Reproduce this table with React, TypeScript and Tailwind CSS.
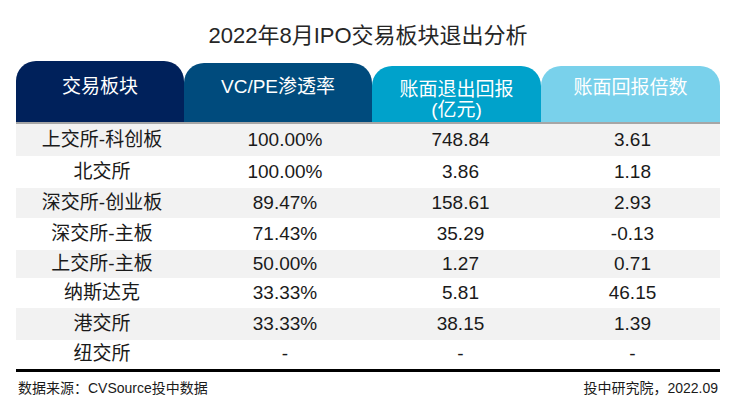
import React from "react";

const rows: { h: string; bg: string; c: string[] }[] = [
  { h: "h-[32px]", bg: "bg-[#f2f2f2]", c: ["上交所-科创板", "100.00%", "748.84", "3.61"] },
  { h: "h-[32px]", bg: "bg-white", c: ["北交所", "100.00%", "3.86", "1.18"] },
  { h: "h-[30px]", bg: "bg-[#f2f2f2]", c: ["深交所-创业板", "89.47%", "158.61", "2.93"] },
  { h: "h-[32px]", bg: "bg-white", c: ["深交所-主板", "71.43%", "35.29", "-0.13"] },
  { h: "h-[28px]", bg: "bg-[#f2f2f2]", c: ["上交所-主板", "50.00%", "1.27", "0.71"] },
  { h: "h-[30px]", bg: "bg-white", c: ["纳斯达克", "33.33%", "5.81", "46.15"] },
  { h: "h-[32px]", bg: "bg-[#f2f2f2]", c: ["港交所", "33.33%", "38.15", "1.39"] },
  { h: "h-[29px]", bg: "bg-white", c: ["纽交所", "-", "-", "-"] },
];

const font = { fontFamily: '"Liberation Sans", "Noto Sans CJK SC", sans-serif' };

export default function App() {
  return (
    <div className="w-[736px] h-[406px] bg-white text-[#1a1a1a] overflow-hidden" style={font}>
      <div className="pt-[22px] h-[50px] text-center text-[22px] leading-[28px] text-[#262626]">
        2022年8月IPO交易板块退出分析
      </div>
      <div className="mx-[16px] mt-[11px]">
        <div className="flex items-end h-[61px] text-white text-[19px]">
          <div className="w-[168px] h-[61px] rounded-t-[20px] bg-[#00215b] text-center pt-[14px] leading-[24px]">
            交易板块
          </div>
          <div className="w-[188px] h-[59px] rounded-t-[20px] bg-[#004b7d] text-center pt-[12px] leading-[24px]">
            VC/PE渗透率
          </div>
          <div className="w-[169px] h-[56px] rounded-t-[20px] bg-[#00a2cb] text-center pt-[14px] leading-[20px]">
            <div>账面退出回报</div>
            <div>(亿元)</div>
          </div>
          <div className="w-[179px] h-[56px] rounded-t-[20px] bg-[#79d1eb] text-center pt-[10px] leading-[24px]">
            账面回报倍数
          </div>
        </div>
        <div className="h-[2px] bg-[#a6a6a6]" />
        {rows.map((r, i) => (
          <div key={i} className={`flex items-center text-[19px] ${r.h} ${r.bg}`}>
            <div className="w-[168px] text-center pl-[4px]">{r.c[0]}</div>
            <div className="w-[188px] text-center pl-[14px]">{r.c[1]}</div>
            <div className="w-[169px] text-center pl-[8px]">{r.c[2]}</div>
            <div className="w-[179px] text-center pl-[4px]">{r.c[3]}</div>
          </div>
        ))}
        <div className="h-[3px] bg-black" />
      </div>
      <div className="mx-[18px] mt-[6px] flex justify-between text-[14px] leading-[20px] text-[#1a1a1a]">
        <span>数据来源：CVSource投中数据</span>
        <span>投中研究院，2022.09</span>
      </div>
    </div>
  );
}
